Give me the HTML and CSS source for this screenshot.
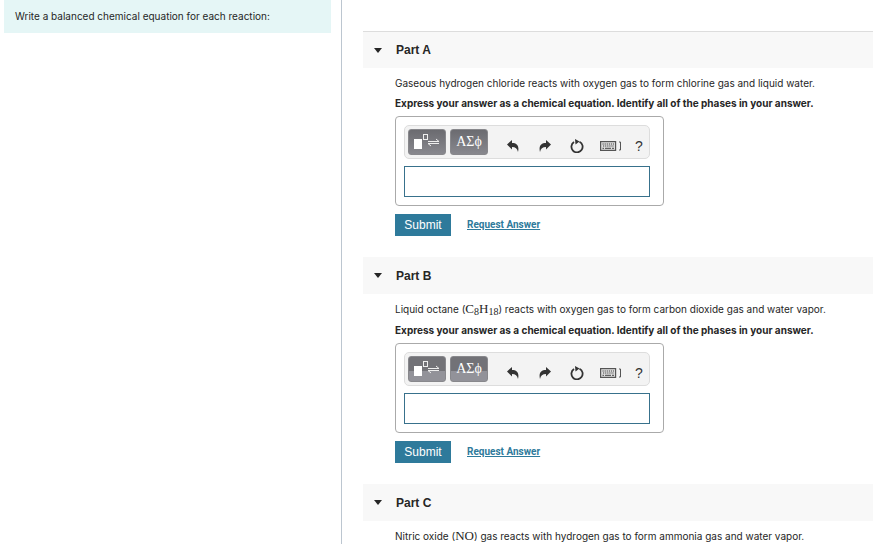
FILE: index.html
```
<!DOCTYPE html>
<html lang="en">
<head>
<meta charset="utf-8">
<title>Balanced chemical equations</title>
<link rel="stylesheet" href="styles.css">
</head>
<body>
<svg class="sprite" aria-hidden="true">
  <symbol id="template" viewBox="0 0 28 18">
    <rect x="1" y="6" width="8" height="10" fill="#fff"/>
    <rect x="10.500" y="1.500" width="4" height="5" fill="none" stroke="#eee"/>
    <path d="M15 8.500H26L23 6M26 10.500H15L18 13" fill="none" stroke="#eee"/>
  </symbol>
  <symbol id="undo" viewBox="0 0 12 12">
    <path d="M0 4.500L5 0V3C10 3 12.500 6 11 12C10.300 8.500 8.500 7 5 7V9.500Z" fill="#333"/>
  </symbol>
  <symbol id="reset" viewBox="0 0 14 14">
    <path d="M9.500 2.700A5.600 5.600 0 1 1 4 3" fill="none" stroke="#333" stroke-width="1.800"/>
    <path d="M5 0L9.500 2.500L5.500 5.500Z" fill="#333"/>
  </symbol>
  <symbol id="keyboard" viewBox="0 0 22 10">
    <rect x=".6" y=".6" width="15" height="8.800" fill="#ddd" stroke="#555" stroke-width="1.200"/>
    <path d="M2.500 3H14M3 5H14" stroke="#444" stroke-width="1.200" stroke-dasharray="1.200 .9"/>
    <path d="M2.500 7.300H4M5 7.300H11M12 7.300H14" stroke="#444"/>
    <path d="M19 1H20.500V9H19" fill="none" stroke="#555"/>
  </symbol>
</svg>
<div class="page">
  <aside class="side">
    <p class="prompt">Write a balanced chemical equation for each reaction:</p>
  </aside>
  <main class="parts">
    <section class="part">
      <h2 class="part-head"><button class="toggle" type="button"><span class="caret"></span>Part A</button></h2>
      <div class="part-body">
        <p class="text">Gaseous hydrogen chloride reacts with oxygen gas to form chlorine gas and liquid water.</p>
        <label class="text strong" for="answer-a">Express your answer as a chemical equation. Identify all of the phases in your answer.</label>
        <div class="editor">
          <div class="toolbar">
            <button class="key" type="button" aria-label="Templates"><svg class="i-template"><use href="#template"/></svg></button>
            <button class="key" type="button">ΑΣϕ</button>
            <div class="tools">
              <button class="tool" type="button" aria-label="Undo"><svg class="i-arrow"><use href="#undo"/></svg></button>
              <button class="tool" type="button" aria-label="Redo"><svg class="i-arrow flip"><use href="#undo"/></svg></button>
              <button class="tool" type="button" aria-label="Reset"><svg class="i-reset"><use href="#reset"/></svg></button>
              <button class="tool" type="button" aria-label="Keyboard shortcuts"><svg class="i-keyboard"><use href="#keyboard"/></svg></button>
              <button class="tool help" type="button">?</button>
            </div>
          </div>
          <input class="answer" id="answer-a" type="text">
        </div>
        <div class="actions"><button class="submit" type="button">Submit</button><a class="request" href="#">Request Answer</a></div>
      </div>
    </section>
    <section class="part">
      <h2 class="part-head"><button class="toggle" type="button"><span class="caret"></span>Part B</button></h2>
      <div class="part-body">
        <p class="text formula">Liquid octane (<span class="math">C<sub>8</sub>H<sub>18</sub></span>) reacts with oxygen gas to form carbon dioxide gas and water vapor.</p>
        <label class="text strong" for="answer-b">Express your answer as a chemical equation. Identify all of the phases in your answer.</label>
        <div class="editor">
          <div class="toolbar">
            <button class="key split" type="button" aria-label="Templates"><svg class="i-template"><use href="#template"/></svg></button>
            <button class="key split" type="button">ΑΣϕ</button>
            <div class="tools">
              <button class="tool" type="button" aria-label="Undo"><svg class="i-arrow"><use href="#undo"/></svg></button>
              <button class="tool" type="button" aria-label="Redo"><svg class="i-arrow flip"><use href="#undo"/></svg></button>
              <button class="tool" type="button" aria-label="Reset"><svg class="i-reset"><use href="#reset"/></svg></button>
              <button class="tool" type="button" aria-label="Keyboard shortcuts"><svg class="i-keyboard"><use href="#keyboard"/></svg></button>
              <button class="tool help" type="button">?</button>
            </div>
          </div>
          <input class="answer" id="answer-b" type="text">
        </div>
        <div class="actions"><button class="submit" type="button">Submit</button><a class="request" href="#">Request Answer</a></div>
      </div>
    </section>
    <section class="part">
      <h2 class="part-head"><button class="toggle" type="button"><span class="caret"></span>Part C</button></h2>
      <div class="part-body">
        <p class="text formula">Nitric oxide (<span class="math">NO</span>) gas reacts with hydrogen gas to form ammonia gas and water vapor.</p>
      </div>
    </section>
  </main>
</div>
</body>
</html>
```

FILE: styles.css
```
* { box-sizing: border-box; }
body {
  margin: 0;
  background: #fff;
  color: #262626;
  font: 10px/20px Inter, Arial, sans-serif;
}
p, h2 { margin: 0; }
button { padding: 0; border: 0; background: none; color: inherit; font: inherit; }
svg { display: block; }
.sprite { display: none; }
.page { display: flex; min-height: 100vh; }
.side {
  flex: 0 0 342px;
  padding: 0 10px 0 4px;
  border-right: 1px solid #bcc6d0;
}
.prompt { padding: 6px 11px 7px; background: #e5f6f6; }
.parts { flex: 1; min-width: 0; padding: 31px 0 0 21px; }
.part-head { background: #f8f8f8; }
.part:first-child .part-head { border-top: 1px solid #ddd; }
.part:first-child .toggle { height: 36px; }
.toggle {
  display: flex;
  align-items: center;
  gap: 14px;
  width: 100%;
  height: 37px;
  padding-left: 11px;
  font: bold 12px "Liberation Sans", Arial, sans-serif;
}
.caret {
  border: solid transparent;
  border-width: 5px 4px 0;
  border-top-color: #262626;
}
.part-body { padding: 5px 0 21px 32px; }
.part:last-child .part-body { padding-bottom: 0; }
.text { display: block; white-space: nowrap; }
.formula { height: 21px; }
.strong { font-weight: bold; }
.math { font-family: "Liberation Serif", serif; font-size: 13px; line-height: 16px; }
.math sub { font-size: 10px; line-height: 10px; vertical-align: -2px; }
.editor {
  width: 269px;
  margin-top: 3px;
  padding: 8px 13px 8px 8px;
  border: 1px solid #aaa;
  border-radius: 4px;
}
.toolbar {
  display: flex;
  gap: 4px;
  height: 34px;
  padding: 3px 0 3px 3px;
  border: 1px solid #ddd;
  border-radius: 5px;
  background: #f3f3f3;
}
.key {
  display: flex;
  align-items: center;
  justify-content: center;
  width: 38px;
  height: 26px;
  border: 1px solid #88888c;
  border-radius: 3px;
  background: linear-gradient(#6b6b70, #88888e);
  color: #fff;
  font: 14px "Liberation Serif", serif;
}
.split { background: linear-gradient(#727277 60%, #929299 60%); }
.i-template { width: 28px; height: 18px; }
.tools {
  display: grid;
  grid-template-columns: 32px 32px 32px 36px 20px;
  align-items: center;
  justify-items: center;
  padding: 8px 0 0 5px;
}
.i-arrow { width: 12px; height: 12px; }
.flip { transform: scaleX(-1); }
.i-reset { width: 14px; height: 14px; }
.i-keyboard { width: 22px; height: 10px; }
.help { color: #333; font: 14px "Liberation Sans", Arial, sans-serif; }
.answer {
  display: block;
  width: 100%;
  height: 31px;
  margin-top: 7px;
  padding: 0 6px;
  border: 1px solid #38718c;
  background: #fff;
  font: inherit;
}
.actions { display: flex; align-items: center; gap: 16px; margin-top: 8px; }
.submit {
  width: 56px;
  height: 22px;
  background: #2e7a9b;
  color: #fff;
  font: 12px "Liberation Sans", Arial, sans-serif;
}
.request { color: #2e7a9b; font: bold 10px/20px Roboto, Arial, sans-serif; }
```
